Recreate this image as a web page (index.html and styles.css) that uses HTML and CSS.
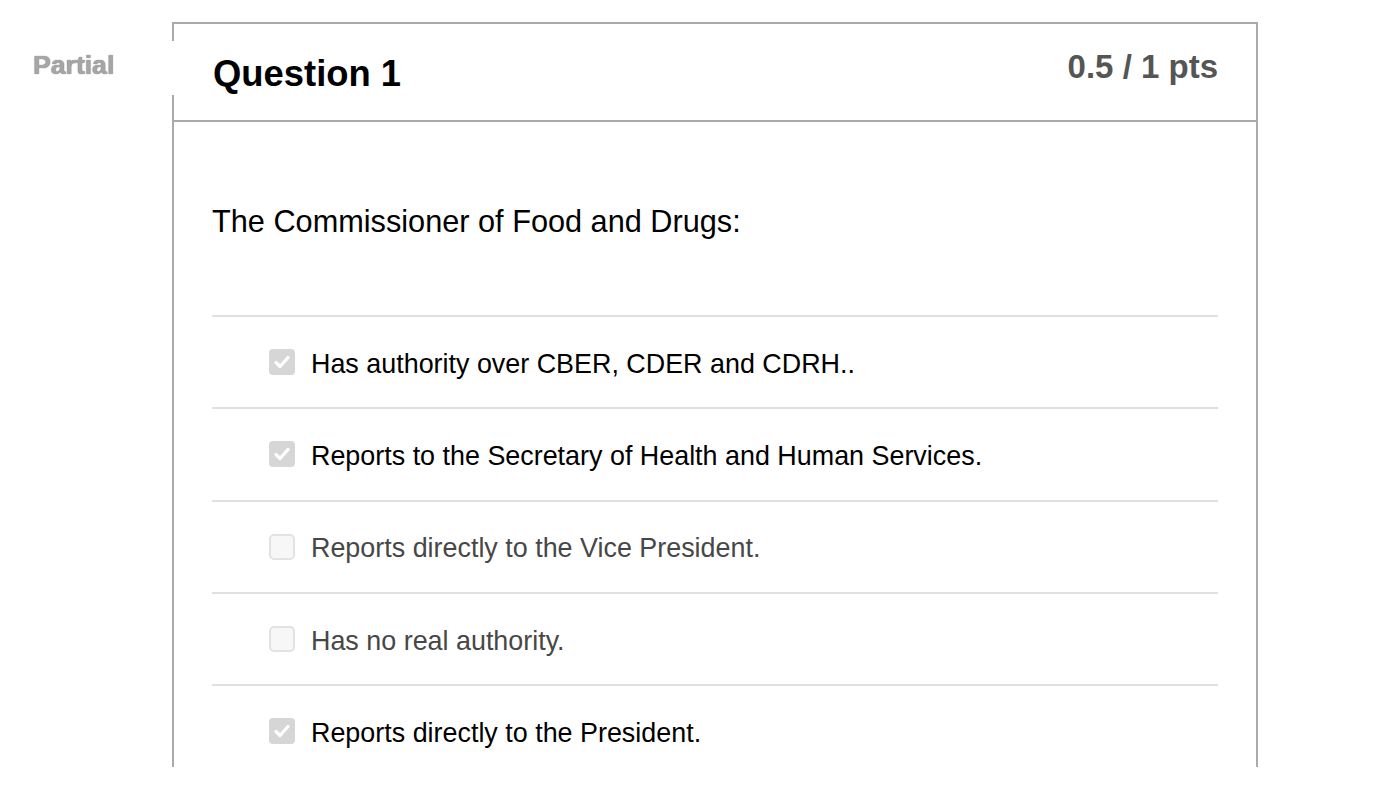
FILE: index.html
```html
<!DOCTYPE html>
<html>
<head>
<meta charset="utf-8">
<link rel="stylesheet" href="styles.css">
</head>
<body>
<div class="page">
  <div class="status">Partial</div>
  <div class="question">
    <div class="q-header">
      <h2 class="q-title">Question 1</h2>
      <div class="q-points">0.5 / 1 pts</div>
    </div>
    <div class="q-body">
      <div class="q-text">The Commissioner of Food and Drugs:</div>
      <div class="answers">
        <div class="answer selected">
          <span class="box checked"><svg viewBox="0 0 26 26" width="26" height="26"><polyline points="7,13.5 11,17.5 19,8.5" fill="none" stroke="#fff" stroke-width="3.2" stroke-linecap="round" stroke-linejoin="round"/></svg></span>
          <span class="label">Has authority over CBER, CDER and CDRH..</span>
        </div>
        <div class="answer selected">
          <span class="box checked"><svg viewBox="0 0 26 26" width="26" height="26"><polyline points="7,13.5 11,17.5 19,8.5" fill="none" stroke="#fff" stroke-width="3.2" stroke-linecap="round" stroke-linejoin="round"/></svg></span>
          <span class="label">Reports to the Secretary of Health and Human Services.</span>
        </div>
        <div class="answer">
          <span class="box"></span>
          <span class="label">Reports directly to the Vice President.</span>
        </div>
        <div class="answer">
          <span class="box"></span>
          <span class="label">Has no real authority.</span>
        </div>
        <div class="answer selected">
          <span class="box checked"><svg viewBox="0 0 26 26" width="26" height="26"><polyline points="7,13.5 11,17.5 19,8.5" fill="none" stroke="#fff" stroke-width="3.2" stroke-linecap="round" stroke-linejoin="round"/></svg></span>
          <span class="label">Reports directly to the President.</span>
        </div>
      </div>
    </div>
  </div>
</div>
</body>
</html>
```
FILE: styles.css
```css
html, body {
  margin: 0;
  padding: 0;
  background: #fff;
}
body {
  font-family: "Liberation Sans", Arial, sans-serif;
  color: #000;
}
.page {
  display: flex;
  align-items: flex-start;
  padding-top: 22px;
}
.status {
  width: 172px;
  box-sizing: border-box;
  padding-left: 33px;
  margin-top: 28px;
  font-size: 26.6px;
  font-weight: bold;
  color: #a6a6a6;
  text-shadow: 0 0 1px #5a5a5a;
  line-height: 30px;
}
.question {
  position: relative;
  width: 1086px;
  height: 745px;
  box-sizing: border-box;
  border: 2px solid #aaa;
  border-bottom: none;
}
.question::before {
  content: "";
  position: absolute;
  left: -2px;
  top: 17px;
  width: 2px;
  height: 54px;
  background: #fff;
}
.q-header {
  display: flex;
  justify-content: space-between;
  align-items: flex-start;
  height: 96px;
  padding: 0 38px 0 39px;
  border-bottom: 2px solid #aaa;
}
.q-title {
  margin: 29px 0 0 0;
  font-size: 36.4px;
  font-weight: bold;
  line-height: 41px;
}
.q-points {
  margin-top: 24px;
  font-size: 33px;
  font-weight: bold;
  color: #555;
  line-height: 38px;
}
.q-body {
  padding: 82px 38px 0 38px;
}
.q-text {
  font-size: 30.7px;
  line-height: 36px;
  margin-bottom: 75px;
}
.answer {
  display: flex;
  align-items: center;
  height: 90.3px;
  border-top: 2px solid #e0e0e0;
  padding-left: 57px;
  font-size: 26.9px;
  color: #474747;
}
.answer.selected {
  color: #000;
}
.box {
  flex: none;
  width: 26px;
  height: 26px;
  box-sizing: border-box;
  border: 2px solid #e2e2e2;
  background: #f7f7f7;
  border-radius: 5px;
  margin-right: 16px;
  display: flex;
}
.box.checked {
  border: none;
  background: #d6d6d6;
  border-radius: 4px;
}
.label {
  line-height: 32px;
  padding-top: 3px;
}
```
